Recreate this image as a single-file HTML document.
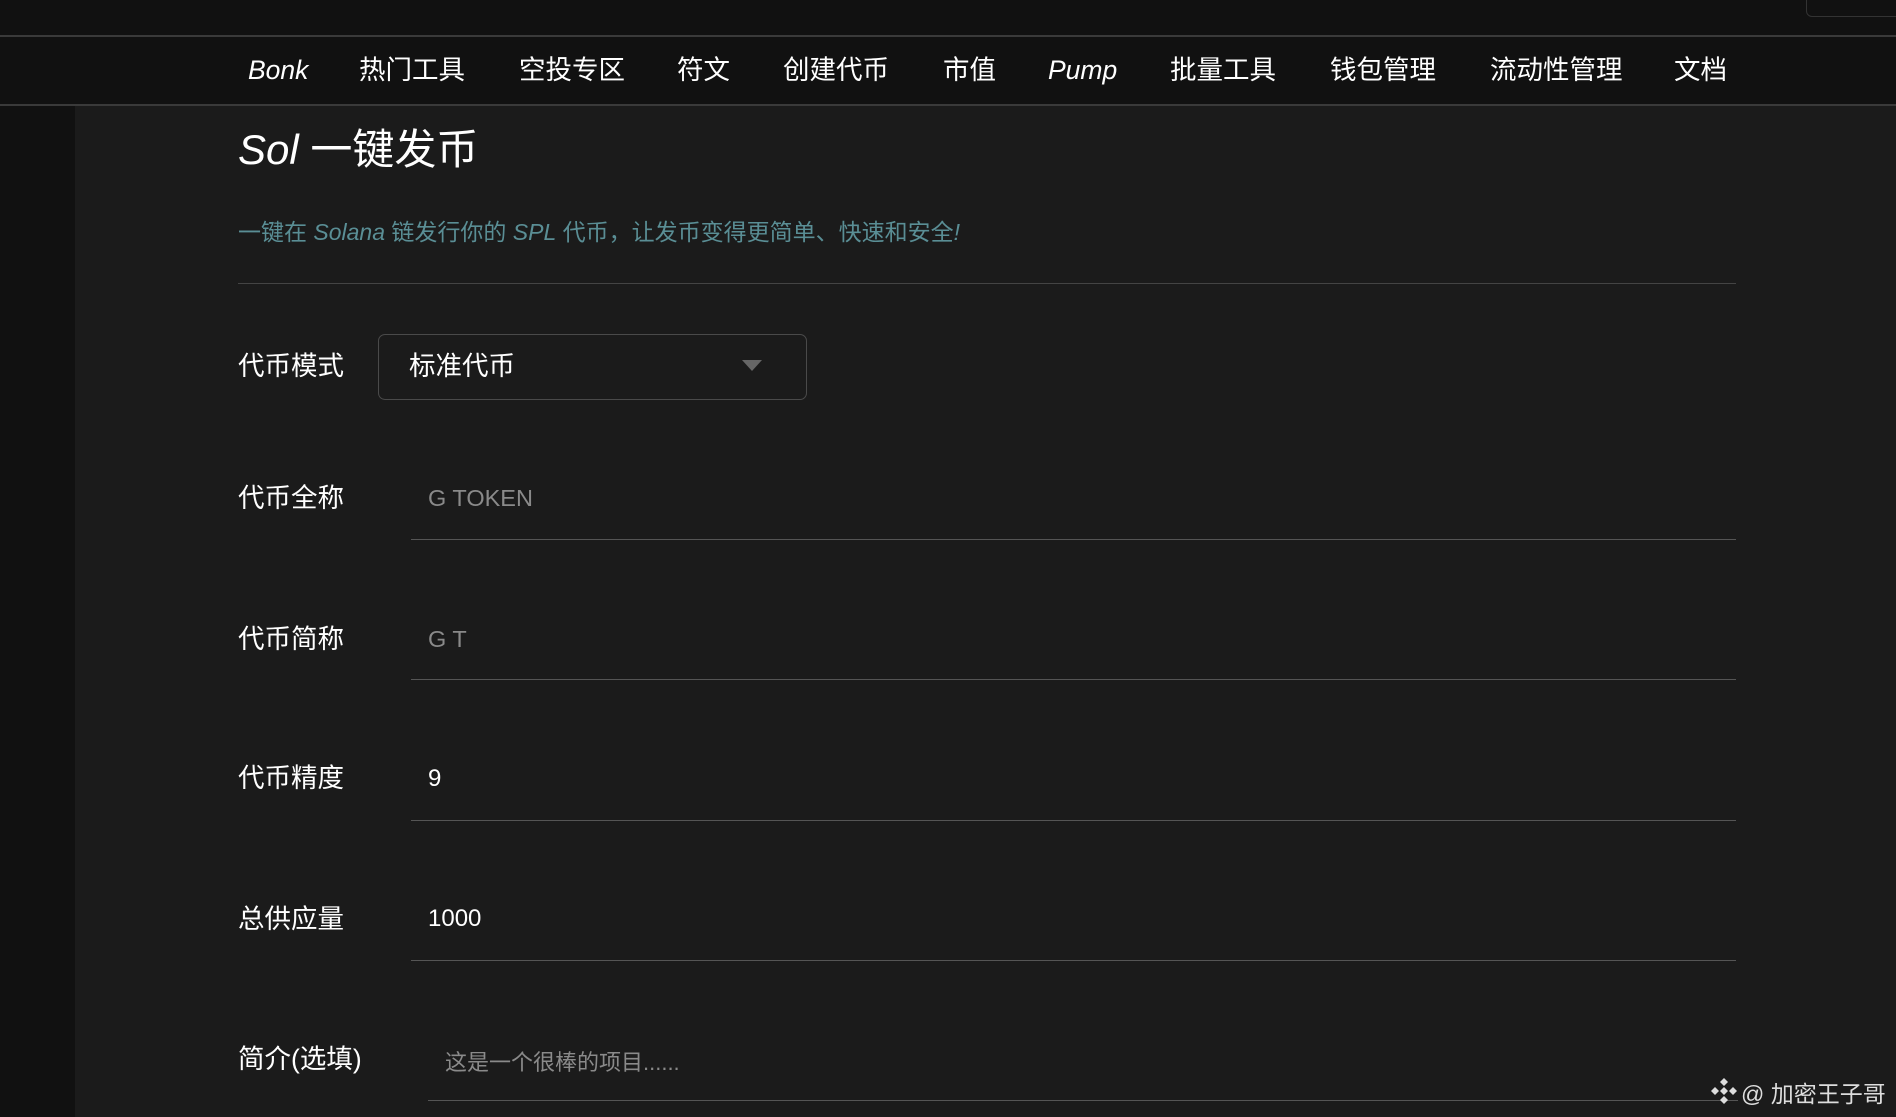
<!DOCTYPE html>
<html><head><meta charset="utf-8"><style>
*{margin:0;padding:0;box-sizing:border-box}
body{width:1896px;height:1117px;background:#1b1b1b;font-family:"Liberation Sans","Noto Sans CJK SC",sans-serif;color:#fff;position:relative;overflow:hidden}
.top{position:absolute;left:0;top:0;width:1896px;height:105px;background:#111}
.l1{position:absolute;left:0;top:35px;width:1896px;height:2px;background:#3a3a3a}
.l2{position:absolute;left:0;top:104px;width:1896px;height:2px;background:#3a3a3a}
.btn{position:absolute;left:1806px;top:-10px;width:110px;height:27px;border:1px solid #333;border-radius:6px}
.nav{position:absolute;top:53px;font-size:26.5px;line-height:34px;white-space:nowrap}
.nav i{font-style:italic}
.side{position:absolute;left:0;top:106px;width:75px;height:1011px;background:#111}
.a{position:absolute;white-space:nowrap}
.lab{font-size:26.5px;line-height:32px}
.ul{position:absolute;height:1px;background:#555}
.ph{color:#8a8a8a;font-size:23.5px}
</style></head><body>
<div class="top"></div><div class="l1"></div><div class="l2"></div><div class="btn"></div>
<div class="nav" style="left:248px"><i>Bonk</i></div>
<div class="nav" style="left:359px">热门工具</div>
<div class="nav" style="left:519px">空投专区</div>
<div class="nav" style="left:677px">符文</div>
<div class="nav" style="left:783px">创建代币</div>
<div class="nav" style="left:943px">市值</div>
<div class="nav" style="left:1048px"><i>Pump</i></div>
<div class="nav" style="left:1170px">批量工具</div>
<div class="nav" style="left:1330px">钱包管理</div>
<div class="nav" style="left:1490px">流动性管理</div>
<div class="nav" style="left:1674px">文档</div>
<div class="side"></div>
<div class="a" style="left:238px;top:123px;font-size:42px;line-height:54px"><i>Sol</i> 一键发币</div>
<div class="a" style="left:238px;top:217px;font-size:23px;line-height:30px;color:#5a8e95">一键在 <i>Solana</i> 链发行你的 <i>SPL</i> 代币，让发币变得更简单、快速和安全<i>!</i></div>
<div class="ul" style="left:238px;top:283px;width:1498px;background:#444"></div>
<div class="a lab" style="left:238px;top:350px">代币模式</div>
<div class="a" style="left:378px;top:334px;width:429px;height:66px;border:1px solid #4a4a4a;border-radius:7px"></div>
<div class="a lab" style="left:409px;top:350px">标准代币</div>
<div class="a" style="left:742px;top:360px;width:0;height:0;border-left:10px solid transparent;border-right:10px solid transparent;border-top:11px solid #666"></div>
<div class="a lab" style="left:238px;top:482px">代币全称</div>
<div class="a ph" style="left:428px;top:485px">G TOKEN</div>
<div class="ul" style="left:411px;top:539px;width:1325px"></div>
<div class="a lab" style="left:238px;top:623px">代币简称</div>
<div class="a ph" style="left:428px;top:626px">G T</div>
<div class="ul" style="left:411px;top:679px;width:1325px"></div>
<div class="a lab" style="left:238px;top:762px">代币精度</div>
<div class="a" style="left:428px;top:765px;font-size:24px">9</div>
<div class="ul" style="left:411px;top:820px;width:1325px"></div>
<div class="a lab" style="left:238px;top:903px">总供应量</div>
<div class="a" style="left:428px;top:905px;font-size:24px">1000</div>
<div class="ul" style="left:411px;top:960px;width:1325px"></div>
<div class="a lab" style="left:238px;top:1043px">简介(选填)</div>
<div class="a" style="left:445px;top:1045px;font-size:22px;color:#8a8a8a">这是一个很棒的项目......</div>
<div class="ul" style="left:428px;top:1100px;width:1310px"></div>
<svg class="a" style="left:1710px;top:1077px" width="28" height="28" viewBox="0 0 28 28" fill="#ddd"><path d="M14 1l4 4-4 4-4-4zM14 19l4 4-4 4-4-4zM5 10l4 4-4 4-4-4zM23 10l4 4-4 4-4-4zM14 10l4 4-4 4-4-4z"/></svg>
<div class="a" style="left:1741px;top:1075px;font-size:23px;color:#ddd">@ 加密王子哥</div>
</body></html>
